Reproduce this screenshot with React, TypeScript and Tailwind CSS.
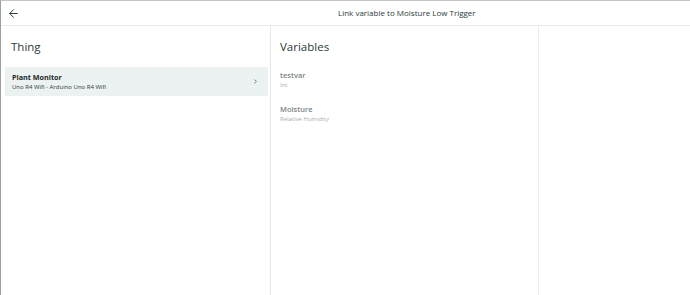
import { ArrowLeft, ChevronRight } from "lucide-react";

const font = { fontFamily: '"Open Sans", "Noto Sans", sans-serif' };

const variables = [
  { name: "testvar", type: "Int" },
  { name: "Moisture", type: "Relative Humidity" },
];

export default function App() {
  return (
    <div
      className="flex h-[295px] w-[690px] flex-col overflow-hidden border-l border-t border-l-[#9e9e9e] border-t-[#c4c4c4] bg-white text-[#1f2a2b]"
      style={font}
    >
      <header className="relative flex h-[25px] shrink-0 items-center border-b border-[#e8ecec]">
        <ArrowLeft className="ml-[6px] h-[13px] w-[13px] text-[#2b3a3b]" strokeWidth={1.8} />
        <h1 className="absolute left-[337px] top-[6px] text-[8px] text-[#2b3a3b]">
          Link variable to Moisture Low Trigger
        </h1>
      </header>

      <div className="flex min-h-0 flex-1">
        <section className="flex w-[270px] shrink-0 flex-col border-r border-[#e4e8e8] pt-[12px]">
          <h2 className="pl-[10px] text-[11.5px] text-[#2b3a3b]">Thing</h2>
          <div className="ml-[4px] mr-[2px] mt-[12px] flex h-[29px] items-center justify-between bg-[#ecf1f1] pl-[7px] pr-[9px]">
            <div className="flex flex-col">
              <span className="text-[7.2px] font-bold leading-[10px] text-[#1f2a2b]">Plant Monitor</span>
              <span className="mt-[1px] text-[6px] leading-[8px] text-[#2b3a3b]">
                Uno R4 Wifi - Arduino Uno R4 Wifi
              </span>
            </div>
            <ChevronRight className="h-[7px] w-[7px] text-[#4a5656]" strokeWidth={2.5} />
          </div>
        </section>

        <section className="flex w-[268px] shrink-0 flex-col border-r border-[#eceeee] pl-[9px] pt-[12px]">
          <h2 className="text-[11.5px] text-[#2b3a3b]">Variables</h2>
          <ul className="mt-[15px] flex flex-col gap-[15px]">
            {variables.map((v) => (
              <li key={v.name} className="flex flex-col">
                <span className="text-[7.5px] font-semibold leading-[10px] text-[#7d8585]">{v.name}</span>
                <span className="mt-[1px] text-[6px] leading-[8px] text-[#a9b0b0]">{v.type}</span>
              </li>
            ))}
          </ul>
        </section>

        <section className="flex-1" />
      </div>
    </div>
  );
}
